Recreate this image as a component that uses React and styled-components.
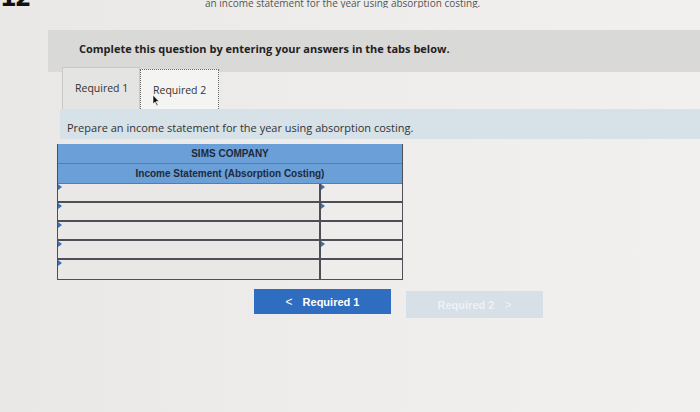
import React from "react";
import styled, { createGlobalStyle } from "styled-components";

const GlobalStyle = createGlobalStyle`
  body {
    margin: 0;
    background: #ecebe9;
    font-family: "Open Sans", "DejaVu Sans", sans-serif;
  }
`;

const Page = styled.div`
  width: 700px;
  height: 412px;
  overflow: hidden;
  background: linear-gradient(90deg, #e9e8e6 0%, #efeeec 60%, #f1f0ee 100%);
`;

const TopLine = styled.div`
  display: flex;
  align-items: flex-end;
  height: 8px;
  overflow: hidden;
`;

const QuestionNo = styled.span`
  font-family: "DejaVu Sans", sans-serif;
  font-weight: bold;
  font-size: 24px;
  line-height: 24px;
  margin-bottom: -2px;
  color: #111;
  width: 205px;
  letter-spacing: -2px;
`;

const TopText = styled.span`
  font-size: 10px;
  line-height: 14px;
  color: #555;
  margin-bottom: -2px;
`;

const Content = styled.div`
  padding-left: 48px;
`;

const Banner = styled.div`
  margin-top: 22px;
  height: 42px;
  background: #d9d9d8;
  display: flex;
  align-items: center;
  padding-left: 31px;
  padding-bottom: 6px;
  box-sizing: border-box;
  font-weight: bold;
  font-size: 11px;
  color: #222;
`;

const TabRow = styled.div`
  display: flex;
  margin-left: 14px;
  margin-top: -5px;
`;

const Tab = styled.div`
  height: ${(p) => (p.active ? "40px" : "42px")};
  margin-top: ${(p) => (p.active ? "2px" : "0")};
  width: ${(p) => (p.active ? "79px" : "78px")};
  box-sizing: border-box;
  display: flex;
  align-items: center;
  padding-left: 12px;
  padding-bottom: ${(p) => (p.active ? "0" : "2px")};
  font-size: 10.5px;
  color: #333;
  background: ${(p) => (p.active ? "#f4f4f2" : "#e4e4e2")};
  border: ${(p) => (p.active ? "1px dotted #666" : "1px solid #c8c8c6")};
  border-bottom: none;
  position: relative;
`;

const Cursor = styled.svg`
  position: absolute;
  left: 11px;
  top: 25px;
`;

const Instructions = styled.div`
  margin-left: 12px;
  height: 30px;
  background: #d6e1e8;
  display: flex;
  align-items: center;
  padding-left: 7px;
  padding-top: 6px;
  box-sizing: border-box;
  font-size: 11px;
  color: #333;
`;

const Table = styled.div`
  margin-left: 9px;
  margin-top: 5px;
  width: 346px;
  border: 1.5px solid #4d4f55;
  border-top: none;
  box-sizing: border-box;
`;

const HeadRow = styled.div`
  height: 19px;
  background: #6b9fd7;
  border-bottom: 1px solid #4b7fba;
  display: flex;
  align-items: center;
  justify-content: center;
  font-family: "Liberation Sans", Arial, sans-serif;
  font-weight: bold;
  font-size: 10px;
  color: #1e2a3a;
`;

const Row = styled.div`
  display: grid;
  grid-template-columns: 263px 1fr;
  height: 17px;
  border-bottom: 2px solid #4d4f55;
  &:last-child {
    border-bottom: none;
    height: 19px;
  }
`;

const Cell = styled.div`
  position: relative;
  background: ${(p) => (p.wide ? "#e9e8e6" : "#eeedeb")};
  border-right: ${(p) => (p.wide ? "2px solid #4d4f55" : "none")};
`;

const Marker = styled.span`
  position: absolute;
  left: 0;
  top: 0;
  width: 0;
  height: 0;
  border-top: 3px solid transparent;
  border-bottom: 3px solid transparent;
  border-left: 4px solid #3d6fb3;
`;

const ButtonRow = styled.div`
  display: flex;
  gap: 15px;
  margin-left: 206px;
  margin-top: 9px;
  align-items: flex-start;
`;

const NavButton = styled.div`
  width: 137px;
  height: ${(p) => (p.disabled ? "27px" : "25px")};
  margin-top: ${(p) => (p.disabled ? "2px" : "0")};
  background: ${(p) => (p.disabled ? "#d7dfe7" : "#2e6dbf")};
  color: ${(p) => (p.disabled ? "#eef2f6" : "#fff")};
  display: flex;
  align-items: center;
  justify-content: center;
  gap: 10px;
  font-family: "Liberation Sans", Arial, sans-serif;
  font-weight: bold;
  font-size: 11px;
`;

const Chevron = styled.span`
  font-size: 12px;
  font-weight: normal;
`;

const rows = [
  [true, true],
  [true, true],
  [true, false],
  [true, true],
  [true, false],
];

export default function App() {
  return (
    <>
      <GlobalStyle />
      <Page>
        <TopLine>
          <QuestionNo>12</QuestionNo>
          <TopText>an income statement for the year using absorption costing.</TopText>
        </TopLine>
        <Content>
          <Banner>Complete this question by entering your answers in the tabs below.</Banner>
          <TabRow>
            <Tab>Required 1</Tab>
            <Tab active>
              Required 2
              <Cursor width="8" height="12" viewBox="0 0 8 12">
                <path d="M1 0 L1 9 L3 7 L5 11 L6 10 L4 6.5 L7 6.5 Z" fill="#111" stroke="#fff" strokeWidth="0.6" />
              </Cursor>
            </Tab>
          </TabRow>
          <Instructions>Prepare an income statement for the year using absorption costing.</Instructions>
          <Table>
            <HeadRow>SIMS COMPANY</HeadRow>
            <HeadRow>Income Statement (Absorption Costing)</HeadRow>
            {rows.map(([l, r], i) => (
              <Row key={i}>
                <Cell wide>{l && <Marker />}</Cell>
                <Cell>{r && <Marker />}</Cell>
              </Row>
            ))}
          </Table>
          <ButtonRow>
            <NavButton>
              <Chevron>&lt;</Chevron>
              Required 1
            </NavButton>
            <NavButton disabled>
              Required 2
              <Chevron>&gt;</Chevron>
            </NavButton>
          </ButtonRow>
        </Content>
      </Page>
    </>
  );
}
